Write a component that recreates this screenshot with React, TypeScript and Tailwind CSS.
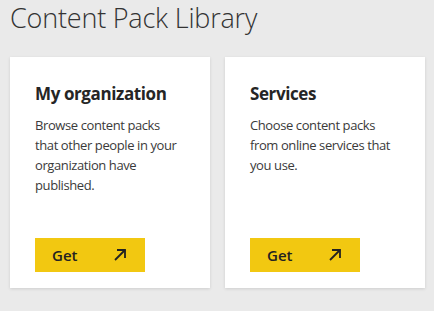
import React from "react";

const packs = [
  {
    title: "My organization",
    text: "Browse content packs that other people in your organization have published.",
  },
  {
    title: "Services",
    text: "Choose content packs from online services that you use.",
  },
];

const ArrowIcon = () => (
  <svg width="14" height="14" viewBox="0 0 14 14" fill="none" stroke="#222" strokeWidth="1.8">
    <path d="M2 12 L12 2" />
    <path d="M4 2 H12 V10" />
  </svg>
);

export default function App() {
  return (
    <div
      className="w-[434px] h-[311px] bg-[#eaeaea] overflow-hidden"
      style={{ fontFamily: '"Open Sans", "Noto Sans", sans-serif' }}
    >
      {/* title */}
      <h1 className="pl-[10px] pt-0 text-[27px] leading-[36px] font-light text-[#333] tracking-[-0.2px]">
        Content Pack Library
      </h1>

      {/* cards */}
      <div className="flex gap-[15px] pl-[10px] pt-[21px]">
        {packs.map((p, idx) => (
          <div
            key={idx}
            className="w-[200px] h-[231px] bg-white shadow-[0_1px_3px_rgba(0,0,0,0.12)] flex flex-col pl-[25px] pr-[25px] pt-[26px] pb-[16px]"
          >
            <h2 className="text-[17px] leading-[22px] font-bold text-[#252525] tracking-[-0.4px]">{p.title}</h2>
            <p className="mt-[10px] text-[13px] leading-[20px] text-[#3a3a3a] tracking-[-0.4px]">{p.text}</p>
            <button className="mt-auto w-[110px] h-[34px] bg-[#f2c811] flex items-center justify-between pl-[17px] pr-[18px] text-[15px] font-semibold text-[#222]">
              <span>Get</span>
              <ArrowIcon />
            </button>
          </div>
        ))}
      </div>
    </div>
  );
}
